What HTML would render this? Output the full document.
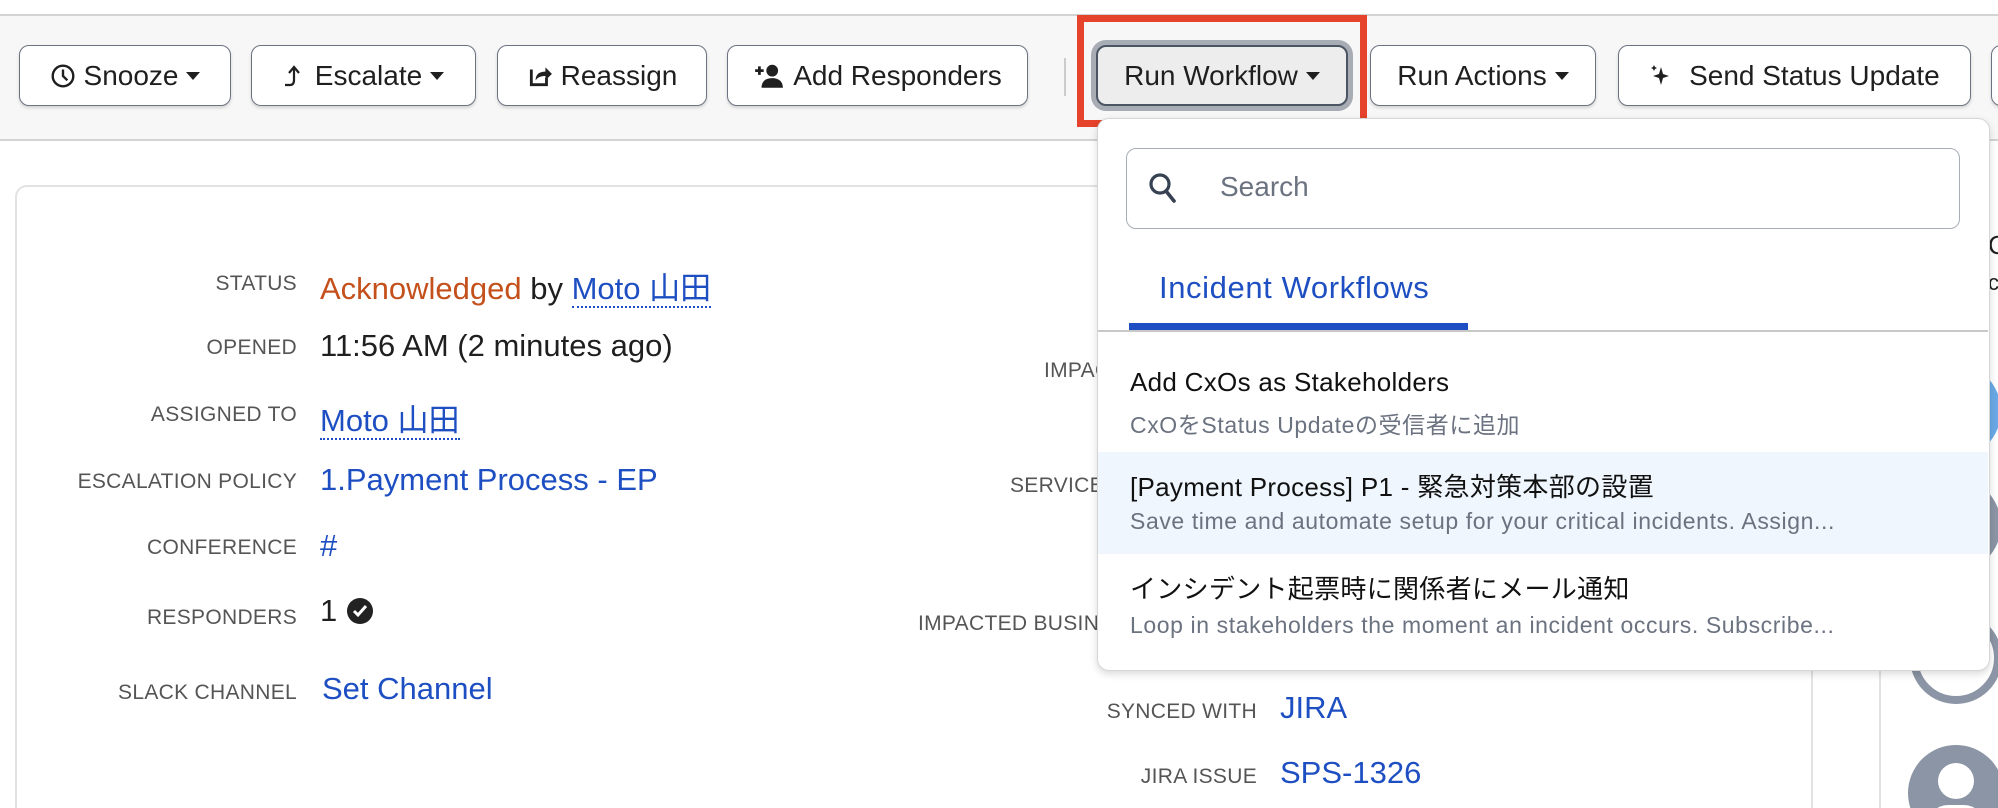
<!DOCTYPE html>
<html><head><meta charset="utf-8"><style>
*{box-sizing:border-box;margin:0;padding:0}
html,body{width:1998px;height:808px;overflow:hidden}
body{background:#fff;font-family:"Liberation Sans","Noto Sans CJK JP",sans-serif;color:#1f1f1f}
#w{position:relative;width:1998px;height:808px;overflow:hidden}
.a{position:absolute}
.tb{left:0;top:14px;width:1998px;height:127px;background:#f7f7f7;border-top:2px solid #d3d3d3;border-bottom:2px solid #d3d3d3}
.btn{position:absolute;top:45px;height:61px;background:#fff;border:1.5px solid #6b7280;border-radius:10px;box-shadow:0 2px 3px rgba(0,0,0,.15);font-size:28px;display:flex;align-items:center;justify-content:center;gap:8px;color:#1f1f1f;white-space:nowrap}
.caret{display:inline-block;border-left:7px solid transparent;border-right:7px solid transparent;border-top:8px solid #1f1f1f;margin-left:0}
.lbl{position:absolute;font-size:21px;color:#555;text-align:right;letter-spacing:.3px;white-space:nowrap}
.val{position:absolute;font-size:31px;white-space:nowrap}
.blue{color:#1e4fc2}
.dot{border-bottom:2px dotted #1e4fc2}
.t{position:absolute;left:1130px;font-size:26px;letter-spacing:.3px;color:#111;white-space:nowrap}
.s{position:absolute;left:1130px;font-size:23px;letter-spacing:.6px;color:#6b7280;white-space:nowrap}
</style></head><body><div id="w">
<div class="a tb"></div>
<div class="btn" style="left:19px;width:212px"><svg width="26" height="26" viewBox="0 0 24 24"><circle cx="12" cy="12" r="9.5" fill="none" stroke="#1f1f1f" stroke-width="2.2"/><path d="M12 6v6l4 4" fill="none" stroke="#1f1f1f" stroke-width="2.2"/></svg>Snooze<span class="caret"></span></div>
<div class="btn" style="left:251px;width:225px"><svg width="24" height="26" viewBox="0 0 24 26"><path d="M2 22h5c3 0 4-2 4-5V6" fill="none" stroke="#1f1f1f" stroke-width="2.2"/><path d="M6 10l5-6 5 6" fill="none" stroke="#1f1f1f" stroke-width="2.2"/></svg>Escalate<span class="caret"></span></div>
<div class="btn" style="left:497px;width:210px"><svg width="26" height="26" viewBox="0 0 24 24"><path d="M4 6v14h14v-6" fill="none" stroke="#1f1f1f" stroke-width="2.6"/><path d="M8 16c0-6 4-8 9-8V4l6 6-6 6v-4c-4 0-7 1-9 4z" fill="#1f1f1f"/></svg>Reassign</div>
<div class="btn" style="left:727px;width:301px"><svg width="32" height="26" viewBox="0 0 30 24"><path d="M2 7h8M6 3v8" stroke="#1f1f1f" stroke-width="2.6"/><circle cx="18" cy="7" r="5.5" fill="#1f1f1f"/><path d="M8 23c0-6 4-9 10-9s10 3 10 9z" fill="#1f1f1f"/></svg>Add Responders</div>
<div class="a" style="left:1064px;top:58px;width:2px;height:38px;background:#ccc"></div>
<div class="a" style="left:1077px;top:15px;width:290px;height:112px;border:7px solid #e5432c"></div>
<div class="btn" style="left:1096px;width:252px;background:#ededed;border:2px solid #4b5563;box-shadow:0 0 0 5px #a8adb5">Run Workflow<span class="caret"></span></div>
<div class="btn" style="left:1370px;width:226px">Run Actions<span class="caret"></span></div>
<div class="btn" style="left:1618px;width:353px"><svg width="24" height="26" viewBox="0 0 24 26"><path d="M12 4l2 7 6 2-6 2-2 7-2-7-6-2 6-2z" fill="#1f1f1f"/><path d="M5 2l1 2 2 1-2 1-1 2-1-2-2-1 2-1z" fill="#1f1f1f"/></svg>&nbsp;Send Status Update</div>
<div class="btn" style="left:1991px;width:40px"></div>

<div class="a" style="left:15px;top:185px;width:1798px;height:700px;border:2px solid #e2e2e2;border-radius:12px"></div>
<div class="a" style="left:1879px;top:141px;width:2px;height:667px;background:#e2e2e2"></div>

<div class="lbl" style="right:1701px;top:272px">STATUS</div>
<div class="val" style="left:320px;top:263px"><span style="color:#c4501c">Acknowledged</span> by <span class="blue dot">Moto 山田</span></div>
<div class="lbl" style="right:1701px;top:336px">OPENED</div>
<div class="val" style="left:320px;top:328px">11:56 AM (2 minutes ago)</div>
<div class="lbl" style="right:1701px;top:403px">ASSIGNED TO</div>
<div class="val" style="left:320px;top:395px"><span class="blue dot">Moto 山田</span></div>
<div class="lbl" style="right:1701px;top:470px">ESCALATION POLICY</div>
<div class="val blue" style="left:320px;top:462px">1.Payment Process - EP</div>
<div class="lbl" style="right:1701px;top:536px">CONFERENCE</div>
<div class="val blue" style="left:320px;top:528px">#</div>
<div class="lbl" style="right:1701px;top:606px">RESPONDERS</div>
<div class="val" style="left:320px;top:593px">1 <svg width="28" height="28" viewBox="0 0 28 28" style="vertical-align:-4px"><circle cx="14" cy="14" r="13" fill="#222"/><path d="M8 14l4 4 8-9" fill="none" stroke="#fff" stroke-width="3"/></svg></div>
<div class="lbl" style="right:1701px;top:681px">SLACK CHANNEL</div>
<div class="val blue" style="left:322px;top:671px">Set Channel</div>

<div class="lbl" style="left:1044px;top:359px">IMPACTED</div>
<div class="lbl" style="left:1010px;top:474px">SERVICE</div>
<div class="lbl" style="left:918px;top:612px">IMPACTED BUSINESS</div>
<div class="lbl" style="right:741px;top:700px">SYNCED WITH</div>
<div class="val blue" style="left:1280px;top:690px">JIRA</div>
<div class="lbl" style="right:741px;top:765px">JIRA ISSUE</div>
<div class="val blue" style="left:1280px;top:755px">SPS-1326</div>

<div class="a" style="left:1988px;top:230px;font-size:26px">C</div>
<div class="a" style="left:1988px;top:270px;font-size:22px">c</div>
<div class="a" style="left:1905px;top:363px;width:96px;height:96px;border-radius:50%;background:#6aa9e6"></div>
<div class="a" style="left:1905px;top:477px;width:96px;height:96px;border-radius:50%;background:#8c95a5"></div>
<div class="a" style="left:1910px;top:612px;width:92px;height:92px;border-radius:50%;border:8px solid #8c95a5"></div>
<div class="a" style="left:1908px;top:745px;width:96px;height:96px;border-radius:50%;background:#8c95a5;overflow:hidden"><div class="a" style="left:30px;top:18px;width:36px;height:36px;border-radius:50%;background:#fff"></div><div class="a" style="left:20px;top:60px;width:56px;height:40px;border-radius:20px;background:#fff"></div></div>

<div class="a" style="left:1097px;top:118px;width:893px;height:553px;background:#fff;border:1.5px solid #d6d6d6;border-radius:12px;box-shadow:0 3px 8px rgba(0,0,0,.15)">
  <div class="a" style="left:0;top:333px;width:890px;height:102px;background:#eff6fd"></div>
</div>
<div class="a" style="left:1126px;top:148px;width:834px;height:81px;border:1.5px solid #a8adb5;border-radius:10px"></div>
<svg class="a" style="left:1148px;top:172px" width="32" height="34" viewBox="0 0 32 34"><circle cx="12" cy="12" r="9" fill="none" stroke="#374151" stroke-width="3.2"/><path d="M18 19l8 10" stroke="#374151" stroke-width="3.6" stroke-linecap="round"/></svg>
<div class="a" style="left:1220px;top:171px;font-size:28px;color:#6b7280">Search</div>
<div class="a" style="left:1159px;top:270px;font-size:31px;letter-spacing:.6px;color:#1e4fc2">Incident Workflows</div>
<div class="a" style="left:1129px;top:323px;width:339px;height:7px;background:#1e4fc2"></div>
<div class="a" style="left:1098px;top:330px;width:890px;height:2px;background:#c8c8c8"></div>
<div class="t" style="top:367px">Add CxOs as Stakeholders</div>
<div class="s" style="top:406px">CxOをStatus Updateの受信者に追加</div>
<div class="t" style="top:467px">[Payment Process] P1 - 緊急対策本部の設置</div>
<div class="s" style="top:508px">Save time and automate setup for your critical incidents. Assign...</div>
<div class="t" style="top:569px">インシデント起票時に関係者にメール通知</div>
<div class="s" style="top:612px">Loop in stakeholders the moment an incident occurs. Subscribe...</div>
</div></body></html>
